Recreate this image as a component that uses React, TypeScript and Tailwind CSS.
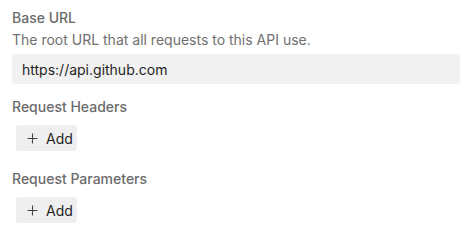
import React from 'react';

function AddButton() {
  return (
    <button
      type="button"
      className="ml-1 mt-[8px] flex h-[26px] w-[61px] items-center gap-[8px] rounded-[3px] bg-[#efefef] pl-[11px] text-[14px] text-[#1f1f1f]"
    >
      <svg width="11" height="11" viewBox="0 0 11 11" className="text-[#444]">
        <path d="M5.5 0.5v10M0.5 5.5h10" stroke="currentColor" strokeWidth="1.1" fill="none" />
      </svg>
      <span>Add</span>
    </button>
  );
}

export default function App() {
  return (
    <div className="h-[248px] w-[474px] bg-white px-3 pt-[8px] font-['Inter','Liberation_Sans',sans-serif]">
      {/* base url */}
      <div className="text-[14px] leading-5 font-medium text-[#6b6b6b]">Base URL</div>
      <div className="mt-[2px] text-[14px] leading-5 text-[#6f6f6f]">
        The root URL that all requests to this API use.
      </div>
      <div className="mt-[4px] flex h-[30px] w-[448px] items-center rounded-[3px] bg-[#f1f1f1] px-[10px] text-[14px] text-[#1f1f1f]">
        https://api.github.com
      </div>

      {/* headers */}
      <div className="mt-[13px] text-[14px] leading-5 font-medium text-[#6b6b6b]">Request Headers</div>
      <AddButton />

      {/* params */}
      <div className="mt-[18px] text-[14px] leading-5 font-medium text-[#6b6b6b]">Request Parameters</div>
      <AddButton />
    </div>
  );
}
